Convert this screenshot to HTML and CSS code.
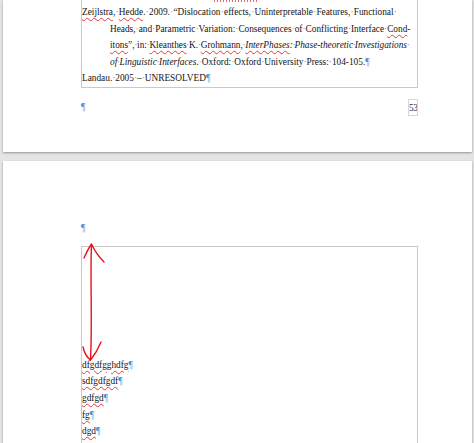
FILE: index.html
```html
<!DOCTYPE html>
<html>
<head>
<meta charset="utf-8">
<link rel="stylesheet" href="styles.css">
</head>
<body>
<div class="desk">
  <section class="page page-one">
    <div class="frame frame-open-top">
      <div class="prev-line"><span class="dots"></span></div>
      <div class="line spread"><span><span class="sp">Zeijlstra</span>,</span><span class="d">·</span><span><span class="sp">Hedde</span>.</span><span class="d">·</span><span>2009.</span><span class="d">·</span><span>“Dislocation</span><span class="d">·</span><span>effects,</span><span class="d">·</span><span>Uninterpretable</span><span class="d">·</span><span>Features,</span><span class="d">·</span><span>Functional</span><span class="d">·</span></div>
      <div class="line indent">Heads,<span class="d">·</span>and<span class="d">·</span>Parametric<span class="d">·</span>Variation:<span class="d">·</span>Consequences<span class="d">·</span>of<span class="d">·</span>Conflicting<span class="d">·</span>Interface<span class="d">·</span><span class="sp">Cond</span>-</div>
      <div class="line indent tight"><span class="sp">itons</span>”,<span class="d">·</span>in:<span class="d">·</span><span class="sp">Kleanthes</span><span class="d">·</span>K.<span class="d">·</span><span class="sp">Grohmann</span>,<span class="d">·</span><i><span class="sp">InterPhases</span>:<span class="d">·</span>Phase-theoretic<span class="d">·</span>Investigations</i><span class="d">·</span></div>
      <div class="line indent"><i>of<span class="d">·</span>Linguistic<span class="d">·</span>Interfaces</i>.<span class="d">·</span>Oxford:<span class="d">·</span>Oxford<span class="d">·</span>University<span class="d">·</span>Press:<span class="d">·</span>104-105.<span class="pil">¶</span></div>
      <div class="line">Landau.<span class="d">·</span>2005<span class="d">·</span>–<span class="d">·</span>UNRESOLVED<span class="pil">¶</span></div>
    </div>
    <div class="footer">
      <span class="pil">¶</span>
      <span class="pageno">53</span>
    </div>
  </section>
  <section class="page page-two">
    <div class="line solo"><span class="pil">¶</span></div>
    <div class="frame frame-open-bottom">
      <svg class="arrow" width="40" height="130" viewBox="0 0 40 130" fill="none" stroke="#e8131c" stroke-width="1.4" stroke-linecap="round" stroke-linejoin="round">
        <path d="M13.5 6 C12 40 14.5 80 12.5 121"/>
        <path d="M6 19 Q10 10 13.5 5 Q18 15 26 23"/>
        <path d="M5 108 Q7 117 12.5 121 Q19 113 23 103"/>
      </svg>
      <div class="line"><span class="sp">dfgdfgghdfg</span><span class="pil">¶</span></div>
      <div class="line"><span class="sp">sdfgdfgdf</span><span class="pil">¶</span></div>
      <div class="line"><span class="sp">gdfgd</span><span class="pil">¶</span></div>
      <div class="line"><span class="sp">fg</span><span class="pil">¶</span></div>
      <div class="line"><span class="sp">dgd</span><span class="pil">¶</span></div>
    </div>
  </section>
</div>
</body>
</html>
```

FILE: styles.css
```css
html, body {
  margin: 0;
  padding: 0;
}
body {
  background: #e4e4e4;
  width: 474px;
  height: 443px;
  overflow: hidden;
  font-family: "Liberation Serif", "Times New Roman", serif;
  font-size: 9.3px;
  color: #141414;
}
.desk {
  padding-left: 3px;
  border-left: 1px solid #cfcfcf;
  margin-left: -1px;
}
.page {
  background: #fff;
  width: 469px;
  box-sizing: border-box;
  padding-left: 78px;
  box-shadow: 0 1px 2px rgba(0,0,0,0.35);
}
.page-one {
  height: 152px;
}
.page-two {
  margin-top: 9px;
  height: 282px;
  padding-top: 59px;
}
.frame {
  width: 337px;
  box-sizing: border-box;
  border: 1px solid #c9c9c9;
  position: relative;
}
.frame-open-top {
  border-top: none;
}
.frame-open-bottom {
  margin-top: 9px;
  border-bottom: none;
  padding-top: 110px;
  height: 197px;
}
.prev-line {
  height: 4px;
}
.dots {
  display: block;
  margin-left: 131px;
  width: 46px;
  height: 2px;
  background: radial-gradient(circle, #e36a6a 45%, transparent 50%) 0 0 / 3px 2px repeat-x;
}
.line {
  line-height: 16.5px;
  height: 16.5px;
  white-space: nowrap;
}
.line.spread {
  display: flex;
  justify-content: space-between;
  width: 315px;
}
.line.tight .d {
  margin: 0 -0.3px;
}
.frame-open-bottom .line {
  line-height: 16.7px;
  height: 16.7px;
}
.line.indent {
  padding-left: 28px;
}
.line.solo {
  line-height: 16.6px;
}
.d {
  color: #8c8c8c;
}
.sp {
  text-decoration: underline wavy #e23a3a;
  text-decoration-thickness: 0.8px;
  text-underline-offset: 1.5px;
}
.pil {
  color: #3f8fd2;
}
.footer {
  width: 337px;
  margin-top: 11px;
  display: flex;
  justify-content: space-between;
  align-items: center;
  height: 17px;
}
.pageno {
  width: 10px;
  height: 17px;
  box-sizing: border-box;
  border: 1px solid #d6d6d6;
  font-size: 9.3px;
  line-height: 17px;
  text-align: right;
  color: #333;
  overflow: hidden;
  letter-spacing: -0.5px;
}
.arrow {
  position: absolute;
  left: -4px;
  top: -8px;
}
```
